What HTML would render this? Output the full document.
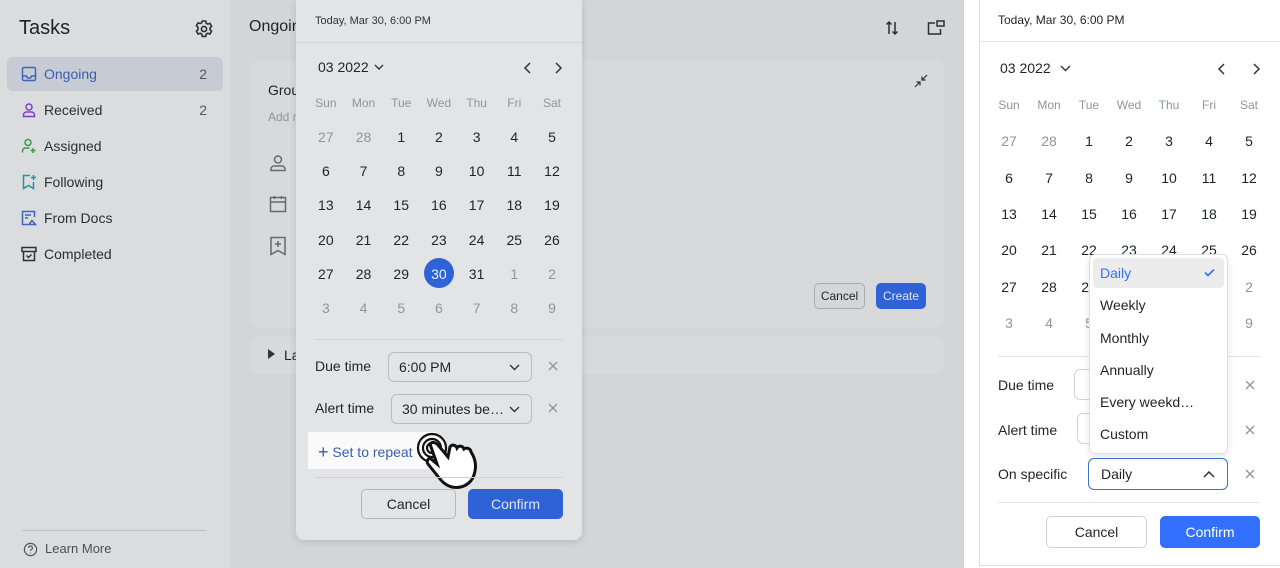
<!DOCTYPE html>
<html><head><meta charset="utf-8"><style>
*{margin:0;padding:0;box-sizing:border-box}
body{width:1280px;height:568px;overflow:hidden;position:relative;background:#d3d5d6;font-family:"Liberation Sans",sans-serif;color:#1f2329}
.a{position:absolute}
.side{left:0;top:0;width:230px;height:568px;background:#dadcdd}
.nav{left:7px;width:216px;height:34px;font-size:14px;color:#2b2f36;display:flex;align-items:center;padding-left:37px}
.nav .n{position:absolute;right:16px}
.ic{position:absolute;left:14px;top:9px}
.grid{display:grid;font-size:14px}
.grid div{display:flex;align-items:center;justify-content:center}
.L{grid-template-columns:repeat(7,37.7px)}
.R{grid-template-columns:repeat(7,40px)}
.g{color:#8f959e}
.w{color:#8f959e;font-size:12px}
.sel{display:flex;align-items:center;border:1px solid #b8bbbf;border-radius:6px;font-size:14px}
.btn{display:flex;align-items:center;justify-content:center;border-radius:5px;font-size:14px}
.x{position:absolute}
</style></head><body>
<div class="a side"></div>
<div class="a" style="left:19px;top:17px;font-size:20px;color:#1f2329">Tasks</div>
<svg class="a" style="left:194px;top:19px" width="20" height="20" viewBox="0 0 20 20" fill="none" stroke="#2b2f36" stroke-width="1.6"><circle cx="10" cy="10" r="2.6"/><path d="M8.3 2h3.4l.5 2.2 1.6.9 2.1-.7 1.7 2.9-1.6 1.5v1.8l1.6 1.5-1.7 2.9-2.1-.7-1.6.9-.5 2.2H8.3l-.5-2.2-1.6-.9-2.1.7-1.7-2.9 1.6-1.5V8.2L2.4 6.7l1.7-2.9 2.1.7 1.6-.9z"/></svg>
<div class="a nav" style="top:57px;background:#c7ccd4;border-radius:6px;color:#3a5db0"><svg class="ic" width="16" height="16" viewBox="0 0 16 16" fill="none" stroke="#3f63c0" stroke-width="1.5"><rect x="1.5" y="1.5" width="13" height="13" rx="1.5"/><path d="M1.5 10h4l1 2h3l1-2h4"/></svg>Ongoing<span class="n" style="color:#555">2</span></div>
<div class="a nav" style="top:93px"><svg class="ic" width="16" height="16" viewBox="0 0 16 16" fill="none" stroke="#7b3fc4" stroke-width="1.5"><circle cx="8" cy="5" r="3"/><path d="M2.5 14.5v-1.5a3 3 0 013-3h5a3 3 0 013 3v1.5z"/></svg>Received<span class="n" style="color:#555">2</span></div>
<div class="a nav" style="top:129px"><svg class="ic" width="16" height="16" viewBox="0 0 16 16" fill="none" stroke="#3a9a4a" stroke-width="1.5"><circle cx="7" cy="4.5" r="3"/><path d="M1.5 14.5v-1.5a3 3 0 013-3h4M12 10v5M9.5 12.5h5"/></svg>Assigned</div>
<div class="a nav" style="top:165px"><svg class="ic" width="16" height="16" viewBox="0 0 16 16" fill="none" stroke="#2a8fa8" stroke-width="1.5"><path d="M9 1.5H2.5v13l5-3 5 3V8M12.5 1v5M10 3.5h5"/></svg>Following</div>
<div class="a nav" style="top:201px"><svg class="ic" width="16" height="16" viewBox="0 0 16 16" fill="none" stroke="#3f63c0" stroke-width="1.5"><path d="M7 14.5H1.5v-13h12V7M4 5h6M4 8h3M8 14.5l3-4 3.5 4z"/></svg>From Docs</div>
<div class="a nav" style="top:237px"><svg class="ic" width="16" height="16" viewBox="0 0 16 16" fill="none" stroke="#2b2f36" stroke-width="1.5"><rect x="1" y="1.5" width="14" height="4"/><path d="M2.5 5.5v9h11v-9M5.5 9.5l2 2 3-3"/></svg>Completed</div>
<div class="a" style="left:22px;top:530px;width:184px;border-top:1px solid #bcbfc3"></div>
<svg class="a" style="left:23px;top:542px" width="15" height="15" viewBox="0 0 16 16" fill="none" stroke="#555" stroke-width="1.3"><circle cx="8" cy="8" r="6.5"/><path d="M6 6.3a2 2 0 113 1.7c-.8.4-1 .9-1 1.6M8 11.5v.5"/></svg>
<div class="a" style="left:45px;top:541px;font-size:13px;color:#4a4f56">Learn More</div>

<div class="a" style="left:249px;top:18px;font-size:16px">Ongoin</div>
<svg class="a" style="left:884px;top:20px" width="16" height="16" viewBox="0 0 16 16" fill="none" stroke="#2b2f36" stroke-width="1.5"><path d="M5 14V2M2.5 4.5L5 2l2.5 2.5M11 2v12M8.5 11.5L11 14l2.5-2.5"/></svg>
<svg class="a" style="left:927px;top:20px" width="18" height="16" viewBox="0 0 18 16" fill="none" stroke="#2b2f36" stroke-width="1.5"><path d="M8 3H1.5v11h12V9"/><rect x="10" y="1" width="7" height="5"/></svg>
<div class="a" style="left:250px;top:60px;width:694px;height:268px;background:#d8d9da;border-radius:10px"></div>
<div class="a" style="left:250px;top:337px;width:694px;height:37px;background:#d8d9da;border-radius:8px"></div>
<div class="a" style="left:268px;top:82px;font-size:14px">Grou</div>
<div class="a" style="left:268px;top:110px;font-size:12px;color:#8f959e">Add r</div>
<svg class="a" style="left:268px;top:349px" width="8" height="10"><path d="M0 0l7 5-7 5z" fill="#333"/></svg>
<div class="a" style="left:284px;top:347px;font-size:14px">La</div>
<svg class="a" style="left:269px;top:154px" width="18" height="18" viewBox="0 0 18 18" fill="none" stroke="#646a73" stroke-width="1.5"><circle cx="9" cy="5.5" r="3.5"/><path d="M2 16.5v-1.5a3 3 0 013-3h8a3 3 0 013 3v1.5z"/></svg>
<svg class="a" style="left:269px;top:195px" width="18" height="18" viewBox="0 0 18 18" fill="none" stroke="#646a73" stroke-width="1.5"><rect x="1.5" y="2.5" width="15" height="14"/><path d="M1.5 7h15M5.5 1v3M12.5 1v3"/></svg>
<svg class="a" style="left:269px;top:236px" width="18" height="20" viewBox="0 0 18 20" fill="none" stroke="#646a73" stroke-width="1.5"><path d="M2 1.5h14v17l-7-4-7 4zM9 5v6M6 8h6"/></svg>
<svg class="a" style="left:914px;top:74px" width="14" height="14" viewBox="0 0 14 14" fill="none" stroke="#2b2f36" stroke-width="1.2"><path d="M8 6L13 1M8 2.5V6h3.5M6 8L1 13M2.5 8H6v3.5"/></svg>
<div class="a btn" style="left:814px;top:283px;width:51px;height:26px;border:1px solid #a9acb0;background:#d5d6d7;font-size:12px">Cancel</div>
<div class="a btn" style="left:876px;top:283px;width:50px;height:26px;background:#2f62d6;color:#dfe7fb;font-size:12px">Create</div>

<!-- popup left -->
<div class="a" style="left:296px;top:0;width:286px;height:540px;background:#e3e4e5;border-radius:0 0 8px 8px;box-shadow:0 2px 8px rgba(0,0,0,.12)"></div>
<div class="a" style="left:296px;top:42px;width:286px;border-top:1px solid #d3d5d7"></div>
<div class="a" style="left:315px;top:15px;font-size:11px;color:#333">Today, Mar 30, 6:00 PM</div>
<div class="a" style="left:318px;top:59px;font-size:14px">03 2022</div>
<svg class="a" style="left:374px;top:64px" width="10" height="7" fill="none" stroke="#333" stroke-width="1.4"><path d="M1 1l4 4 4-4"/></svg>
<svg class="a" style="left:523px;top:62px" width="40" height="12" fill="none" stroke="#333" stroke-width="1.5"><path d="M7 1L2 6l5 5M33 1l5 5-5 5"/></svg>
<div class="a" style="left:424px;top:258px;width:30px;height:30px;border-radius:50%;background:#2f62d6"></div>
<div class="a grid L" style="left:307px;top:94px;grid-auto-rows:18px"><div class="w">Sun</div><div class="w">Mon</div><div class="w">Tue</div><div class="w">Wed</div><div class="w">Thu</div><div class="w">Fri</div><div class="w">Sat</div></div>
<div class="a grid L" style="left:307px;top:120px;grid-auto-rows:34.2px">
<div class="g">27</div><div class="g">28</div><div>1</div><div>2</div><div>3</div><div>4</div><div>5</div>
<div>6</div><div>7</div><div>8</div><div>9</div><div>10</div><div>11</div><div>12</div>
<div>13</div><div>14</div><div>15</div><div>16</div><div>17</div><div>18</div><div>19</div>
<div>20</div><div>21</div><div>22</div><div>23</div><div>24</div><div>25</div><div>26</div>
<div>27</div><div>28</div><div>29</div><div style="color:#eef2fc">30</div><div>31</div><div class="g">1</div><div class="g">2</div>
<div class="g">3</div><div class="g">4</div><div class="g">5</div><div class="g">6</div><div class="g">7</div><div class="g">8</div><div class="g">9</div>
</div>
<div class="a" style="left:315px;top:339px;width:247px;border-top:1px solid #cfd1d3"></div>
<div class="a" style="left:315px;top:358px;font-size:14px">Due time</div>
<div class="a sel" style="left:388px;top:352px;width:144px;height:30px;padding-left:10px">6:00 PM<svg style="position:absolute;right:11px;top:11px" width="11" height="7" fill="none" stroke="#333" stroke-width="1.4"><path d="M1 1l4.5 4.5L10 1"/></svg></div>
<svg class="a" style="left:548px;top:361px" width="10" height="10" stroke="#8f959e" stroke-width="1.3"><path d="M1 1l8 8M9 1l-8 8"/></svg>
<div class="a" style="left:315px;top:400px;font-size:14px">Alert time</div>
<div class="a sel" style="left:391px;top:394px;width:141px;height:30px;padding-left:10px">30 minutes be…<svg style="position:absolute;right:11px;top:11px" width="11" height="7" fill="none" stroke="#333" stroke-width="1.4"><path d="M1 1l4.5 4.5L10 1"/></svg></div>
<svg class="a" style="left:548px;top:403px" width="10" height="10" stroke="#8f959e" stroke-width="1.3"><path d="M1 1l8 8M9 1l-8 8"/></svg>
<div class="a" style="left:308px;top:432px;width:128px;height:37px;background:#fafafa"></div>
<div class="a" style="left:318px;top:441px;font-size:14px;color:#3a5db0"><span style="font-size:18px;position:relative;top:1px">+</span> Set to repeat</div>
<svg class="a" style="left:412px;top:428px" width="90" height="70" viewBox="0 0 90 70"><g fill="none" stroke="#111" stroke-width="2.2"><circle cx="20" cy="20" r="14" fill="#fff"/><circle cx="20" cy="20" r="9"/><circle cx="20" cy="20" r="5"/><path fill="#fff" stroke-width="3" d="M18 16c3-3 6-1 8 1l10 12 2-10c2-3 6-2 7 1 2-3 6-2 7 1 3-2 7 0 7 3 4 6 6 14 3 23-3 9-12 14-22 12-8-2-12-8-16-13l-8-10c-2-3 0-6 3-5l6 5z"/></g></svg>
<div class="a" style="left:315px;top:477px;width:247px;border-top:1px solid #cfd1d3"></div>
<div class="a btn" style="left:361px;top:489px;width:95px;height:30px;border:1px solid #b3b6ba;background:#e3e4e5">Cancel</div>
<div class="a btn" style="left:468px;top:489px;width:95px;height:30px;background:#2f62d6;color:#dfe7fb">Confirm</div>

<!-- right panel -->
<div class="a" style="left:964px;top:0;width:316px;height:568px;background:#fff"></div>
<div class="a" style="left:979px;top:0;width:301px;height:566px;border-left:1px solid #dcdee0;border-bottom:1px solid #dcdee0"></div>
<div class="a" style="left:980px;top:41px;width:300px;border-top:1px solid #e5e6e8"></div>
<div class="a" style="left:998px;top:13px;font-size:12px;color:#1f2329">Today, Mar 30, 6:00 PM</div>
<div class="a" style="left:1000px;top:60px;font-size:14px">03 2022</div>
<svg class="a" style="left:1060px;top:65px" width="11" height="7" fill="none" stroke="#333" stroke-width="1.4"><path d="M1 1l4.5 4.5L10 1"/></svg>
<svg class="a" style="left:1217px;top:63px" width="45" height="12" fill="none" stroke="#333" stroke-width="1.5"><path d="M7 1L2 6l5 5M37 1l5 5-5 5"/></svg>
<div class="a grid R" style="left:989px;top:96px;grid-auto-rows:18px"><div class="w">Sun</div><div class="w">Mon</div><div class="w">Tue</div><div class="w">Wed</div><div class="w">Thu</div><div class="w">Fri</div><div class="w">Sat</div></div>
<div class="a grid R" style="left:989px;top:123px;grid-auto-rows:36.4px">
<div class="g">27</div><div class="g">28</div><div>1</div><div>2</div><div>3</div><div>4</div><div>5</div>
<div>6</div><div>7</div><div>8</div><div>9</div><div>10</div><div>11</div><div>12</div>
<div>13</div><div>14</div><div>15</div><div>16</div><div>17</div><div>18</div><div>19</div>
<div>20</div><div>21</div><div>22</div><div>23</div><div>24</div><div>25</div><div>26</div>
<div>27</div><div>28</div><div>29</div><div></div><div></div><div class="g">1</div><div class="g">2</div>
<div class="g">3</div><div class="g">4</div><div class="g">5</div><div></div><div></div><div class="g">8</div><div class="g">9</div>
</div>
<div class="a" style="left:998px;top:356px;width:262px;border-top:1px solid #e5e6e8"></div>
<div class="a" style="left:998px;top:377px;font-size:14px">Due time</div>
<div class="a sel" style="left:1074px;top:369px;width:30px;height:31px;border-color:#d0d3d6"></div>
<svg class="a" style="left:1245px;top:380px" width="10" height="10" stroke="#8f959e" stroke-width="1.3"><path d="M1 1l8 8M9 1l-8 8"/></svg>
<div class="a" style="left:998px;top:422px;font-size:14px">Alert time</div>
<div class="a sel" style="left:1077px;top:413px;width:30px;height:31px;border-color:#d0d3d6"></div>
<svg class="a" style="left:1245px;top:425px" width="10" height="10" stroke="#8f959e" stroke-width="1.3"><path d="M1 1l8 8M9 1l-8 8"/></svg>
<div class="a" style="left:998px;top:466px;font-size:14px">On specific</div>
<div class="a sel" style="left:1088px;top:458px;width:140px;height:32px;border-color:#3f6fd8;padding-left:12px">Daily<svg style="position:absolute;right:12px;top:12px" width="12" height="8" fill="none" stroke="#333" stroke-width="1.5"><path d="M1 6l5-5 5 5"/></svg></div>
<svg class="a" style="left:1245px;top:469px" width="10" height="10" stroke="#8f959e" stroke-width="1.3"><path d="M1 1l8 8M9 1l-8 8"/></svg>
<div class="a" style="left:998px;top:502px;width:262px;border-top:1px solid #e5e6e8"></div>
<div class="a btn" style="left:1046px;top:516px;width:101px;height:32px;border:1px solid #d0d3d6;background:#fff">Cancel</div>
<div class="a btn" style="left:1160px;top:516px;width:100px;height:32px;background:#3370ff;color:#fff">Confirm</div>
<!-- dropdown -->
<div class="a" style="left:1089px;top:254px;width:139px;height:200px;background:#fff;border:1px solid #dee0e3;border-radius:6px;box-shadow:0 3px 8px rgba(0,0,0,.1)"></div>
<div class="a" style="left:1093px;top:258px;width:131px;height:30px;background:#ececed;border-radius:4px"></div>
<div class="a" style="left:1100px;top:265px;font-size:14px;color:#3370ff">Daily</div>
<svg class="a" style="left:1204px;top:268px" width="11" height="9" fill="none" stroke="#3370ff" stroke-width="1.6"><path d="M1 4.5l3 3 6-6"/></svg>
<div class="a" style="left:1100px;top:297px;font-size:14px">Weekly</div>
<div class="a" style="left:1100px;top:330px;font-size:14px">Monthly</div>
<div class="a" style="left:1100px;top:362px;font-size:14px">Annually</div>
<div class="a" style="left:1100px;top:394px;font-size:14px">Every weekd…</div>
<div class="a" style="left:1100px;top:426px;font-size:14px">Custom</div>
</body></html>
